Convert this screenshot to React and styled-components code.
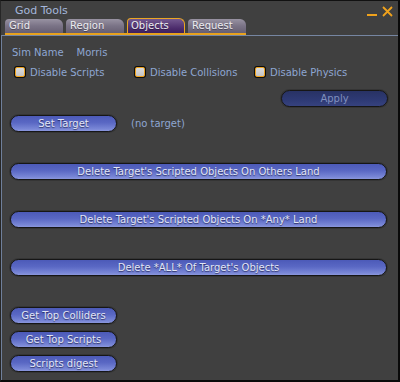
import React from "react";
import styled, { createGlobalStyle } from "styled-components";

const GlobalStyle = createGlobalStyle`
  html, body { margin: 0; padding: 0; background: #000; }
  * { box-sizing: border-box; }
`;

const FONT = `"DejaVu Sans", "Liberation Sans", sans-serif`;

const Window = styled.div`
  width: 400px;
  height: 382px;
  background: #404040;
  border-top: 1px solid #111;
  border-left: 1px solid #262626;
  border-right: 2px solid #0a0a0a;
  border-bottom: 2px solid #0a0a0a;
  display: flex;
  flex-direction: column;
  font-family: ${FONT};
  font-size: 10px;
`;

const TitleBar = styled.div`
  height: 18px;
  display: flex;
  align-items: center;
  padding: 0 5px 0 14px;
`;

const Title = styled.div`
  color: #a4b6da;
  font-size: 11px;
  flex: 1;
`;

const Controls = styled.div`
  display: flex;
  align-items: center;
  gap: 5px;
  margin-top: 2px;
`;

const Minimize = styled.div`
  width: 10px;
  height: 2px;
  background: #f0a21c;
  margin-top: 7px;
`;

const TabBar = styled.div`
  height: 16px;
  display: flex;
  align-items: flex-end;
  padding-left: 4px;
`;

const TabStrip = styled.div`
  display: flex;
  gap: 3px;
  height: 16px;
  align-items: flex-end;
  border-bottom: 2px solid #e8a21e;
`;

const Tab = styled.div`
  width: 58px;
  height: 14px;
  border-radius: 4px 6px 0 0;
  padding: 0 0 0 4px;
  line-height: 14px;
  color: #ececf0;
  text-shadow: 0 1px 0 rgba(0, 0, 0, 0.35);
  background: ${(p) =>
    p.$active
      ? "linear-gradient(#735890, #4a2a6a 70%, #40205e)"
      : "linear-gradient(#9892a2, #7a7386 50%, #675f72)"};
  border: ${(p) => (p.$active ? "1px solid #eaa624" : "none")};
  border-bottom: none;
  ${(p) => p.$active && "height: 15px; line-height: 13px; padding-left: 3px;"}
`;

const Panel = styled.div`
  flex: 1;
  border-top: 1px solid #7686a2;
  border-left: 1px solid #6f7f9a;
  display: flex;
  flex-direction: column;
  padding: 0 10px 0 8px;
`;

const Row = styled.div`
  display: flex;
  align-items: center;
  margin-top: ${(p) => p.$mt}px;
  height: ${(p) => p.$h || 17}px;
  justify-content: ${(p) => (p.$right ? "flex-end" : "flex-start")};
`;

const Label = styled.span`
  color: #8ea6d2;
  font-size: 10px;
  white-space: nowrap;
  margin-left: ${(p) => p.$ml || 0}px;
`;

const CheckCell = styled.label`
  width: 120px;
  display: flex;
  align-items: center;
  gap: 5px;
  padding-left: 5px;
`;

const Box = styled.span`
  width: 10px;
  height: 10px;
  border: 1px solid #ec9f1a;
  border-radius: 2px;
  box-shadow: 0 0 0 1px #0c0c0c;
  background: linear-gradient(#dcdcdc, #c4c4c4);
  flex: none;
`;

const Button = styled.div`
  height: 17px;
  width: ${(p) => (p.$wide ? "377px" : "107px")};
  border-radius: 9px;
  border: 1px solid #161616;
  box-shadow: 0 0 0 1px #353535;
  display: flex;
  align-items: center;
  justify-content: center;
  font-size: 10px;
  color: ${(p) => (p.$disabled ? "#8090be" : "#e2e6f6")};
  text-shadow: ${(p) => (p.$disabled ? "none" : "0 1px 1px rgba(20,20,60,0.7)")};
  background: ${(p) =>
    p.$disabled
      ? "linear-gradient(#283264, #2e3a74 60%, #36427e)"
      : "linear-gradient(#4c5ab8, #5a68c4 45%, #7886d6 85%, #8a96dc)"};
`;

const Close = () => (
  <svg width="11" height="11" viewBox="0 0 11 11">
    <path d="M1 1 L10 10 M10 1 L1 10" stroke="#f0a21c" strokeWidth="1.8" />
  </svg>
);

export default function App() {
  return (
    <>
      <GlobalStyle />
      <Window>
        <TitleBar>
          <Title>God Tools</Title>
          <Controls>
            <Minimize />
            <Close />
          </Controls>
        </TitleBar>
        <TabBar>
          <TabStrip>
            <Tab>Grid</Tab>
            <Tab>Region</Tab>
            <Tab $active>Objects</Tab>
            <Tab>Request</Tab>
          </TabStrip>
        </TabBar>
        <Panel>
          <Row $mt={9} $h={14}>
            <Label $ml={2}>Sim Name</Label>
            <Label $ml={13}>Morris</Label>
          </Row>
          <Row $mt={6} $h={14}>
            <CheckCell>
              <Box />
              <Label>Disable Scripts</Label>
            </CheckCell>
            <CheckCell>
              <Box />
              <Label>Disable Collisions</Label>
            </CheckCell>
            <CheckCell>
              <Box />
              <Label>Disable Physics</Label>
            </CheckCell>
          </Row>
          <Row $mt={11} $right>
            <Button $disabled>Apply</Button>
          </Row>
          <Row $mt={8}>
            <Button>Set Target</Button>
            <Label $ml={14}>(no target)</Label>
          </Row>
          <Row $mt={31}>
            <Button $wide>Delete Target's Scripted Objects On Others Land</Button>
          </Row>
          <Row $mt={31}>
            <Button $wide>Delete Target's Scripted Objects On *Any* Land</Button>
          </Row>
          <Row $mt={31}>
            <Button $wide>Delete *ALL* Of Target's Objects</Button>
          </Row>
          <Row $mt={31}>
            <Button>Get Top Colliders</Button>
          </Row>
          <Row $mt={7}>
            <Button>Get Top Scripts</Button>
          </Row>
          <Row $mt={7}>
            <Button>Scripts digest</Button>
          </Row>
        </Panel>
      </Window>
    </>
  );
}
